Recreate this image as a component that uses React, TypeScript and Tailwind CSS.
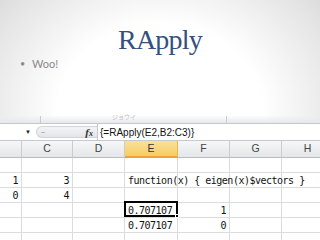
import React from "react";

const cols = [
  { w: 22, label: "" },
  { w: 51, label: "C" },
  { w: 52, label: "D" },
  { w: 53, label: "E" },
  { w: 52, label: "F" },
  { w: 52, label: "G" },
  { w: 52, label: "H" },
];

type Cell = { t?: string; align?: "l" | "r" };
const rows: Cell[][] = [
  [{}, {}, {}, {}, {}, {}, {}],
  [{ t: "1", align: "r" }, { t: "3", align: "r" }, {}, { t: "function(x) { eigen(x)$vectors }", align: "l" }, {}, {}, {}],
  [{ t: "0", align: "r" }, { t: "4", align: "r" }, {}, {}, {}, {}, {}],
  [{}, {}, {}, { t: "0.707107", align: "l" }, { t: "1", align: "r" }, {}, {}],
  [{}, {}, {}, { t: "0.707107", align: "l" }, { t: "0", align: "r" }, {}, {}],
  [{}, {}, {}, {}, {}, {}, {}],
];

export default function App() {
  return (
    <div className="relative w-[320px] h-[240px] overflow-hidden bg-[radial-gradient(ellipse_at_50%_45%,#ffffff_45%,#e2e2e2_85%,#d4d4d4_100%)]">
      <div className="pt-[26px] h-[54px] text-center text-[28px] leading-[28px] tracking-[-0.8px] text-[#34507f]" style={{ fontFamily: '"Liberation Serif", serif' }}>
        RApply
      </div>
      <div className="flex items-center h-[20px] pl-[20px] text-[11px] leading-[20px] text-[#8a8a8a]" style={{ fontFamily: 'Lato, sans-serif' }}>
        <span className="w-[12px] text-[9px]">•</span>
        <span>Woo!</span>
      </div>
      <div className="h-[42px]" />
      {/* ribbon strip */}
      <div className="relative h-[8px] bg-[linear-gradient(to_bottom,rgba(240,242,245,0.2),#e6e8ec)] border-b border-[#c4c8ce]">
        <div className="absolute left-[40px] top-0 h-full w-px bg-[#c8ccd2]" />
        <div className="absolute left-[226px] top-0 h-full w-px bg-[#c8ccd2]" />
        <div className="absolute left-[112px] top-[-4px] text-[6px] text-[#c0c0c0]" style={{ fontFamily: '"Noto Sans CJK JP", sans-serif' }}>ジョウイ</div>
      </div>
      {/* formula bar */}
      <div className="flex h-[17px] bg-white border-b border-[#c6cad0]">
        <div className="w-[36px] flex items-center justify-end pr-[5px]">
          <span className="text-[6px] leading-none text-[#222]">▼</span>
        </div>
        <div className="relative w-[61px] my-[2px] rounded-l-full bg-[linear-gradient(to_bottom,#f3f4f6,#e2e5e9)] border border-r-0 border-[#d0d4d9] flex items-center">
          <span className="ml-[4px] text-[8px] leading-none text-[#a0a4aa]">–</span>
          <span className="ml-auto mr-[4px] text-[11px] leading-none italic text-[#333] font-bold" style={{ fontFamily: '"Liberation Serif", serif' }}>
            f<span className="text-[8px]">x</span>
          </span>
        </div>
        <div className="flex-1 border-l border-[#c6cad0] flex items-center pl-[2px] text-[10px] text-[#111]" style={{ fontFamily: '"Liberation Sans", sans-serif' }}>
          {"{=RApply(E2,B2:C3)}"}
        </div>
      </div>
      {/* column headers */}
      <div className="flex h-[17px]">
        {cols.map((c, i) => (
          <div
            key={i}
            className={
              "shrink-0 flex items-center justify-center border-r text-[10.5px] " +
              (c.label === "E"
                ? "bg-[linear-gradient(to_bottom,#fae29a,#f6cc62)] border-[#e9b84a] border-b-2 border-b-[#f0a23a] text-[#333]"
                : "bg-[linear-gradient(to_bottom,#f6f7f8,#e4e6e9)] border-[#c9ccd1] border-b border-b-[#b8bcc2] text-[#444]")
            }
            style={{ width: c.w, fontFamily: '"Liberation Sans", sans-serif' }}
          >
            {c.label}
          </div>
        ))}
      </div>
      {/* rows */}
      {rows.map((r, ri) => (
        <div key={ri} className="flex h-[15px]">
          {r.map((cell, ci) => (
            <div
              key={ci}
              className={
                "relative shrink-0 bg-white border-r border-b border-[#dadcdf] flex items-center text-[10px] tracking-[-0.5px] text-[#111] whitespace-nowrap " +
                (cell.align === "r" ? "justify-end pr-[3px]" : "pl-[3px]") +
                (ci === 3 ? " overflow-visible z-10" : "")
              }
              style={{ width: cols[ci].w, fontFamily: '"DejaVu Sans Mono", monospace' }}
            >
              {cell.t}
              {ri === 3 && ci === 3 && (
                <>
                  <div className="absolute left-[-1px] top-[-2px] w-[54px] h-[16px] border-2 border-black" />
                  <div className="absolute left-[50px] top-[11px] w-[4px] h-[4px] bg-black border border-white" />
                </>
              )}
            </div>
          ))}
        </div>
      ))}
    </div>
  );
}
